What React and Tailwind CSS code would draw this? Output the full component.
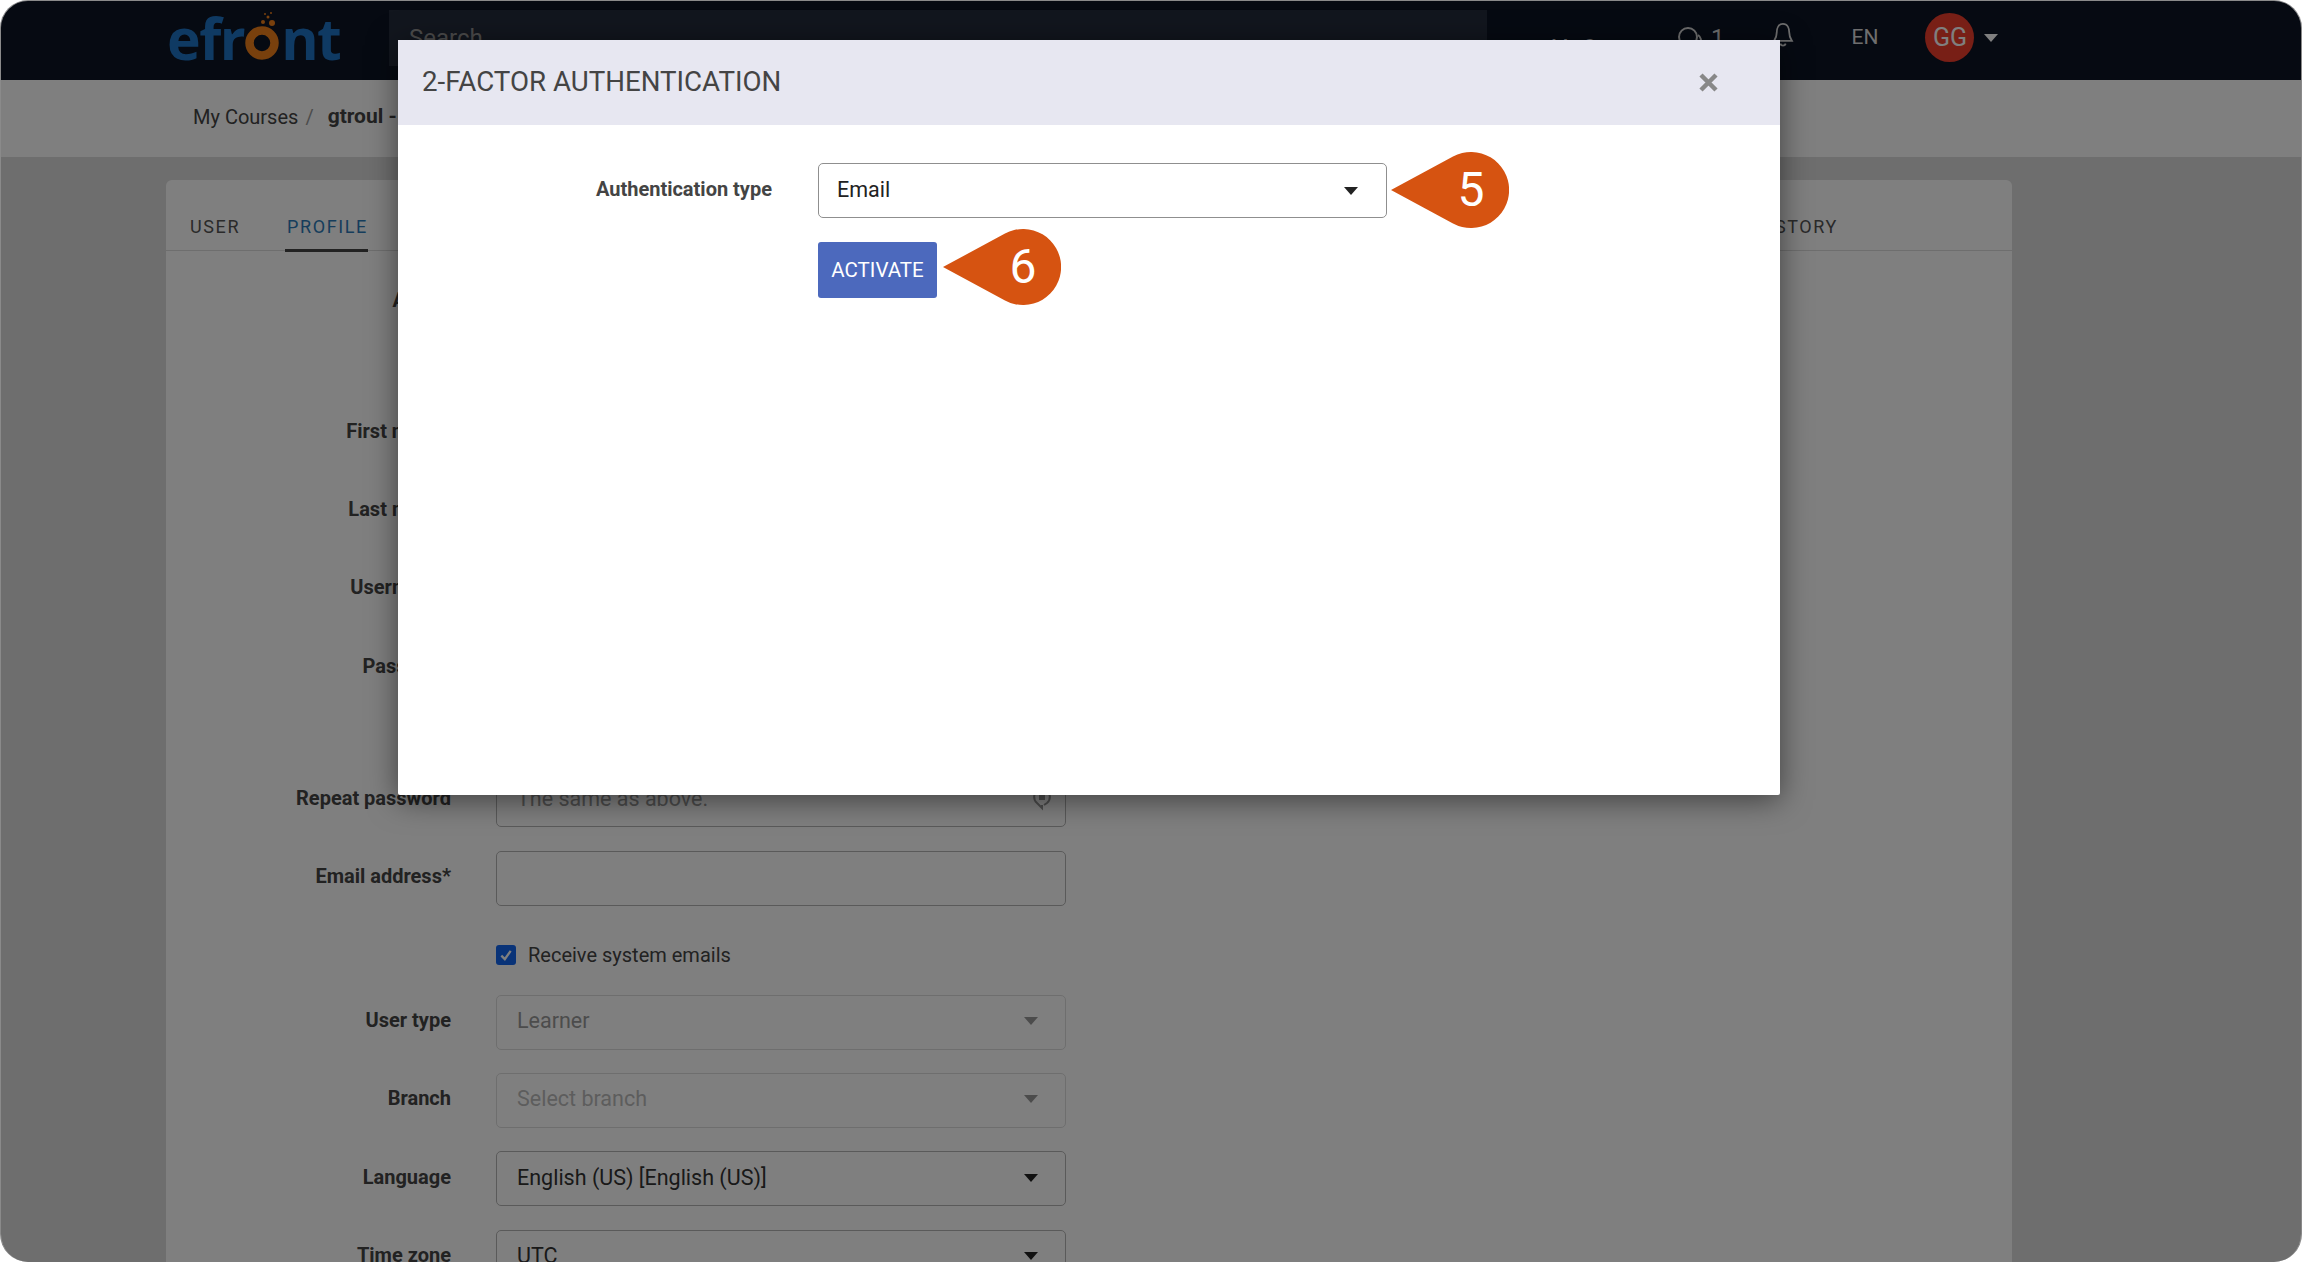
import React from "react";

const sans = "font-['Roboto','Liberation_Sans',sans-serif]";

function Caret({ className = "" }) {
  return (
    <svg viewBox="0 0 14 8" className={"w-[14px] h-[8px] " + className} aria-hidden="true">
      <path d="M0 0h14L7 8z" fill="currentColor" />
    </svg>
  );
}

function Logo() {
  return (
    <div className="relative flex items-end w-[174px] h-[50px] text-[#1e74c6] font-['Open_Sans',sans-serif] font-bold text-[57px] leading-[50px] tracking-[-1.5px]">
      <span>efr</span>
      <span className="relative w-[35px] h-[34px] shrink-0 mb-[3px] mx-[1px]">
        <svg viewBox="0 0 34 34" className="absolute left-0 bottom-0 w-[34px] h-[34px]">
          <circle cx="17" cy="17" r="12.5" fill="none" stroke="#f0801a" strokeWidth="8.5" />
        </svg>
        <svg viewBox="0 0 34 16" className="absolute left-0 -top-[16px] w-[34px] h-[16px]">
          <circle cx="27" cy="13" r="3" fill="#f0801a" />
          <circle cx="18" cy="12" r="2" fill="#f0801a" />
          <circle cx="23" cy="7" r="1.5" fill="#f0801a" />
          <circle cx="20" cy="4" r="1" fill="#f0801a" />
          <circle cx="26" cy="3" r="1" fill="#f0801a" />
        </svg>
      </span>
      <span>nt</span>
    </div>
  );
}

function Field({ label, children, className = "" }) {
  return (
    <div className={"grid grid-cols-[285px_570px] gap-x-[45px] items-center " + className}>
      <label className="text-right font-bold text-[20px] leading-[24px] pb-[4px] text-[#444]">{label}</label>
      {children}
    </div>
  );
}

function Box({ children, dim = false }) {
  return (
    <div className={`flex items-center justify-between pl-[20px] pr-[27px] pb-[2px] h-[55px] border rounded-[5px] bg-white text-[21.5px] ${dim ? "border-[#ddd] text-[#999]" : "border-[#b5b5b5] text-[#333]"}`}>
      {children}
    </div>
  );
}

export default function App() {
  return (
    <div className="w-[2302px] h-[1262px] bg-white overflow-hidden">
      <div className={`relative w-full h-full overflow-hidden rounded-[28px] border-t border-l border-r border-[#8a8a8a] bg-[#dddddd] ${sans}`}>
        <header className="flex items-center h-[79px] bg-[#0c1424] pl-[166px] pb-[6px] text-[#ddd]">
          <Logo />
          <div className="ml-[48px] flex items-center w-[1098px] h-[56px] bg-[#242c3c] px-[20px] text-[24px] text-[#999]">Search</div>
          <span className="ml-[64px] mt-[18px] w-[90px] whitespace-nowrap text-[20px] text-[#ccc]">My Courses</span>
          <div className="ml-[36px] flex items-center gap-[6px] text-[24px]">
            <svg viewBox="0 0 28 24" className="w-[28px] h-[24px]" fill="none" stroke="currentColor" strokeWidth="2">
              <circle cx="11" cy="11" r="9" />
              <path d="M21 9c3 2 4 6 2 9l1 4-5-2" />
            </svg>
            <span>1</span>
          </div>
          <svg viewBox="0 0 24 30" className="ml-[47px] mb-[5px] w-[22px] h-[27px]" fill="none" stroke="currentColor" strokeWidth="2">
            <path d="M12 2c5 0 7 5 7 10 0 5 2 7 3 9H2c1-2 3-4 3-9 0-5 2-10 7-10z" />
            <path d="M9 24c1 3 5 3 6 0" />
          </svg>
          <span className="ml-[58px] text-[21px]">EN</span>
          <div className="ml-[47px] flex items-center justify-center w-[49px] h-[49px] rounded-full bg-[#f03e2c] text-[25px] text-white">GG</div>
          <Caret className="ml-[10px] text-white" />
        </header>

        <nav className="flex items-center h-[77px] bg-white pl-[192px] pb-[4px] text-[20px] text-[#444]">
          <span>My Courses</span>
          <span className="ml-[7px] mr-[14px] text-[#999]">/</span>
          <span className="font-bold text-[21px]">gtroul - Profile</span>
        </nav>

        <main className="px-[165px] pt-[23px]">
          <section className="w-[1846px] h-[1100px] bg-white rounded-t-[6px]">
            <div className="flex items-end h-[71px] border-b border-[#ddd] pl-[24px] text-[18px] leading-[24px] tracking-[1.6px] text-[#555]">
              <span className="pb-[11px] w-[97px]">USER</span>
              <span className="relative pb-[11px] text-[#2c7bb8]">
                PROFILE
                <span className="absolute -left-[2px] right-0 -bottom-[2px] h-[3px] bg-[#444]"></span>
              </span>
              <span className="ml-auto pb-[11px] mr-[174px]">HISTORY</span>
            </div>

            <div className="pt-[34px] flex flex-col">
              <div className="h-[55px] grid grid-cols-[285px_570px] gap-x-[45px] items-start"><span className="text-right font-bold text-[20px] text-[#444]">Avatar</span></div>
              <div className="mt-[65px] flex flex-col gap-[23.4px]">
                <Field label="First name*"><Box>{" "}</Box></Field>
                <Field label="Last name*"><Box>{" "}</Box></Field>
                <Field label="Username*"><Box>{" "}</Box></Field>
                <Field label="Password"><Box dim>{" "}</Box></Field>
              </div>
              <div className="mt-[77px] flex flex-col gap-[23.4px]">
                <Field label="Repeat password">
                  <Box>
                    <span className="text-[#999]">The same as above.</span>
                    <svg viewBox="0 0 20 24" className="-mr-[14px] w-[20px] h-[24px] text-[#999]" fill="none" stroke="currentColor" strokeWidth="2">
                      <path d="M6 3a8 8 0 0 0-1 13l5 5v-3M14 3a8 8 0 0 1 1 13l-3 2" />
                      <rect x="7" y="6" width="6" height="7" fill="currentColor" stroke="none" />
                    </svg>
                  </Box>
                </Field>
                <Field label="Email address*"><Box>{" "}</Box></Field>
              </div>
              <Field className="mt-[34px]" label="">
                <div className="flex items-center gap-[12px] text-[20px] text-[#444]">
                  <span className="flex items-center justify-center w-[20px] h-[20px] rounded-[3px] bg-[#1266f1]">
                    <svg viewBox="0 0 12 12" className="w-[14px] h-[14px]" fill="none" stroke="white" strokeWidth="2"><path d="M2 6.5l3 3 5-7" /></svg>
                  </span>
                  Receive system emails
                </div>
              </Field>
              <div className="mt-[25px] flex flex-col gap-[23.4px]">
                <Field label="User type"><Box dim>Learner<Caret className="text-[#999]" /></Box></Field>
                <Field label="Branch"><Box dim><span className="text-[#bbb]">Select branch</span><Caret className="text-[#999]" /></Box></Field>
                <Field label="Language"><Box>English (US) [English (US)]<Caret className="text-[#222]" /></Box></Field>
                <Field label="Time zone"><Box>UTC<Caret className="text-[#222]" /></Box></Field>
              </div>
            </div>
          </section>
        </main>

        {/* Dimmed backdrop */}
        <div className="absolute inset-0 bg-black/50"></div>

        {/* Dialog */}
        <div className="absolute left-[397px] top-[39px] w-[1382px] h-[755px] bg-white shadow-[0_5px_30px_rgba(0,0,0,0.5)] rounded-[2px]">
          <div className="flex items-center justify-between h-[85px] bg-[#e7e7f1] pl-[24px] pr-[62px]">
            <h2 className="pb-[2px] text-[27.7px] font-normal text-[#444] leading-none">2-FACTOR AUTHENTICATION</h2>
            <svg viewBox="0 0 19 19" className="w-[19px] h-[19px] text-[#888]" fill="none" stroke="currentColor" strokeWidth="4.5"><path d="M2 2l15 15M17 2L2 17" /></svg>
          </div>
          <div className="flex flex-col pt-[38px] pl-[420px]">
            <div className="relative flex items-center">
              <span className="absolute -left-[346px] w-[300px] text-right font-bold text-[20px] text-[#444] pb-[4px]">Authentication type</span>
              <div className="flex items-center justify-between w-[569px] h-[55px] border border-[#8f8f8f] rounded-[5px] pl-[18px] pr-[28px] text-[21.5px] text-[#222]">
                Email
                <Caret className="text-[#222]" />
              </div>
              <Callout num="5" className="left-[573px] -top-[11px]" />
            </div>
            <div className="relative mt-[24px]">
              <button className="flex items-center justify-center w-[119px] h-[56px] rounded-[3px] bg-[#4c69bd] text-[20.5px] text-white">ACTIVATE</button>
              <Callout num="6" className="left-[125px] -top-[13px]" />
            </div>
          </div>
        </div>
      </div>
    </div>
  );
}

function Callout({ num, className = "" }) {
  return (
    <div className={"absolute w-[118px] h-[76px] " + className}>
      <svg viewBox="0 0 118 76" className="absolute inset-0 w-[118px] h-[76px]">
        <path d="M0 38 L62 4.6 A38 38 0 1 1 62 71.4 Z" fill="#d65311" />
      </svg>
      <span className="absolute left-[42px] w-[76px] top-0 h-[76px] flex items-center justify-center text-[48px] text-white leading-none">{num}</span>
    </div>
  );
}
